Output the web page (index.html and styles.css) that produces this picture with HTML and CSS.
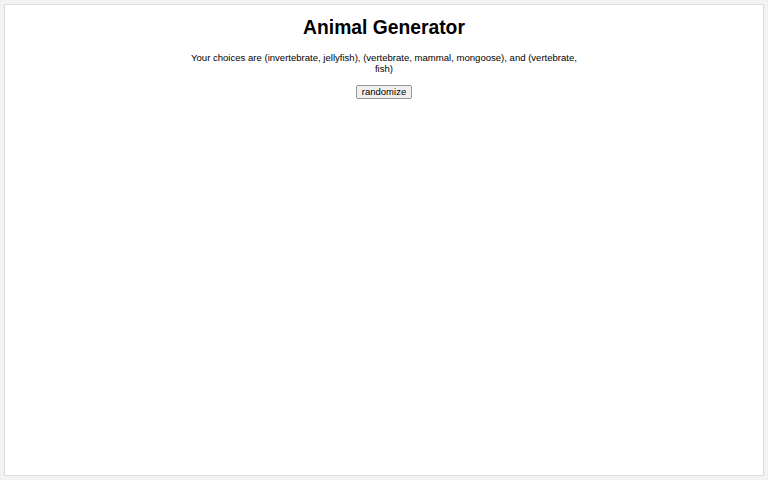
FILE: index.html
```html
<!DOCTYPE html>
<html lang="en">
<head>
    <meta charset="UTF-8">
    <meta name="viewport" content="width=device-width, initial-scale=1.0">
    <title>Animal Generator</title>
    <link rel="stylesheet" href="styles.css">
</head>
<body>
    <div class="app">
        <h1>Animal Generator</h1>
        <p class="choices">Your choices are (invertebrate, jellyfish), (vertebrate, mammal, mongoose), and (vertebrate, fish)</p>
        <button class="randomize">randomize</button>
    </div>
</body>
</html>
```

FILE: styles.css
```css
/* Base */
* {
    box-sizing: border-box;
    margin: 0;
    padding: 0;
}

html, body {
    height: 100%;
}

body {
    background-color: #f2f2f2;
    font-family: "Liberation Sans", Arial, sans-serif;
    color: #000;
    padding: 4px;
}

/* Card */
.app {
    height: 472px;
    background-color: #fff;
    border: 1px solid #ddd;
    text-align: center;
    padding-top: 11px;
}

h1 {
    font-size: 19.3px;
    font-weight: bold;
    line-height: 24px;
    margin-bottom: 12px;
}

.choices {
    width: 392px;
    margin: 0 auto 7px;
    font-size: 9.55px;
    line-height: 11px;
}

.randomize {
    font-family: "Liberation Sans", Arial, sans-serif;
    font-size: 9.5px;
    line-height: 12px;
    padding: 0 5px;
    color: #000;
    background-color: #f0f0f0;
    border: 1px solid #999;
    border-radius: 2px;
}
```
